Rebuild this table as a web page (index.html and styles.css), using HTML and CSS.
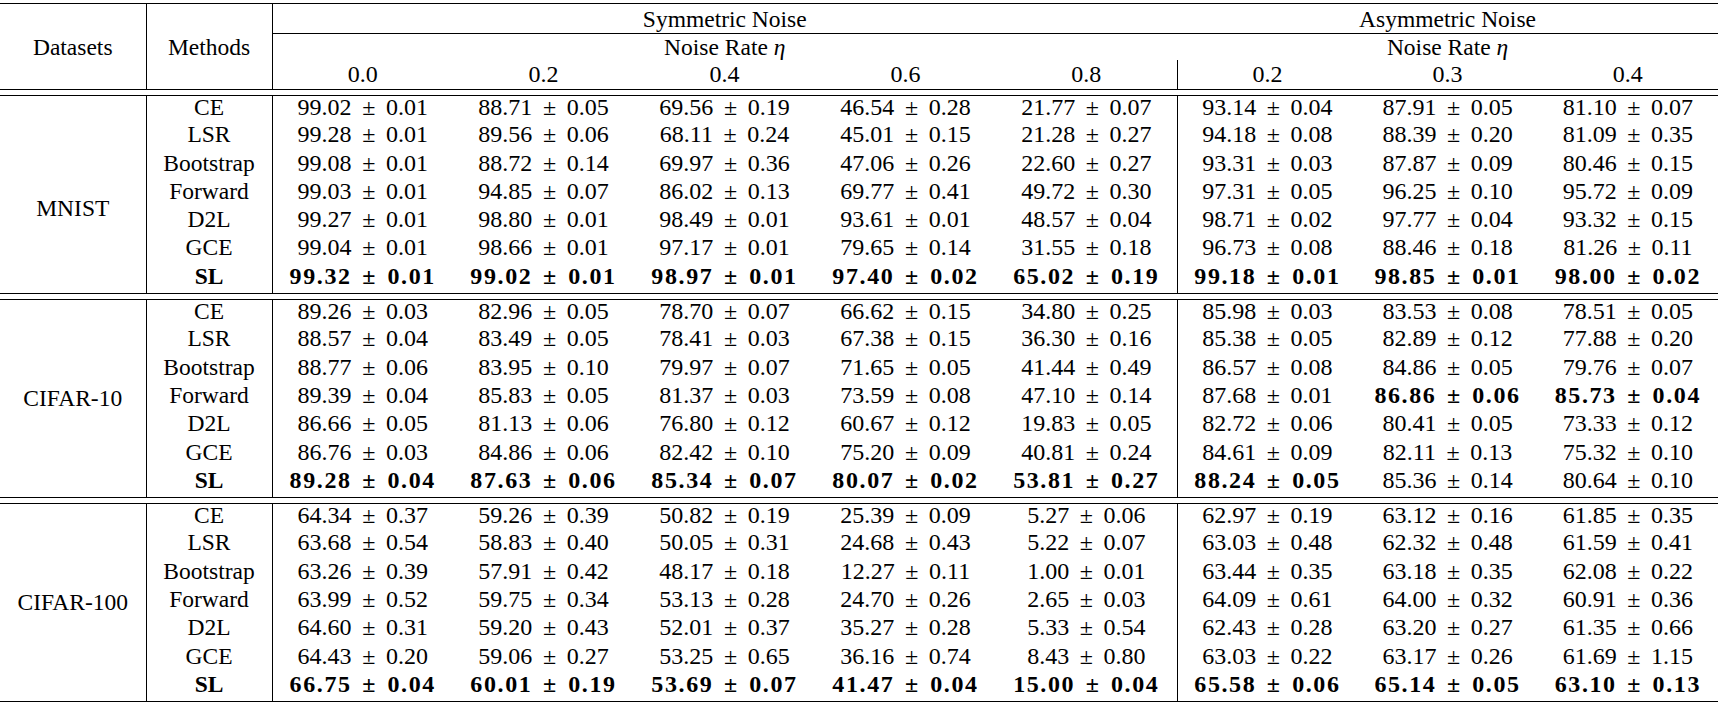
FILE: index.html
```html
<!DOCTYPE html>
<html>
<head>
<meta charset="utf-8">
<link rel="stylesheet" href="styles.css">
</head>
<body>
<table class="tbl">
<colgroup>
<col class="c-ds"><col class="c-m">
<col class="c-s"><col class="c-s"><col class="c-s"><col class="c-s"><col class="c-s">
<col class="c-a"><col class="c-a"><col class="c-a">
</colgroup>
<thead>
<tr class="h1">
<th rowspan="3" class="lbl vr">Datasets</th>
<th rowspan="3" class="lbl vr">Methods</th>
<th colspan="5" class="lbl cl">Symmetric Noise</th>
<th colspan="3" class="lbl cl">Asymmetric Noise</th>
</tr>
<tr class="h2">
<th colspan="5" class="lbl">Noise Rate <i class="eta">η</i></th>
<th colspan="3" class="lbl">Noise Rate <i class="eta">η</i></th>
</tr>
<tr class="h3">
<th class="num">0.0</th><th class="num">0.2</th><th class="num">0.4</th><th class="num">0.6</th><th class="num vr">0.8</th>
<th class="num">0.2</th><th class="num">0.3</th><th class="num">0.4</th>
</tr>
</thead>
<tbody>
<tr class="dbl dbl-head"><td colspan="10"></td></tr>
<tr><td rowspan="7" class="lbl vr ds ds-mnist">MNIST</td><td class="lbl vr">CE</td>
<td>99.02<span class="pm">±</span>0.01</td><td>88.71<span class="pm">±</span>0.05</td><td>69.56<span class="pm">±</span>0.19</td><td>46.54<span class="pm">±</span>0.28</td><td class="vr">21.77<span class="pm">±</span>0.07</td>
<td>93.14<span class="pm">±</span>0.04</td><td>87.91<span class="pm">±</span>0.05</td><td>81.10<span class="pm">±</span>0.07</td></tr>
<tr><td class="lbl vr">LSR</td>
<td>99.28<span class="pm">±</span>0.01</td><td>89.56<span class="pm">±</span>0.06</td><td>68.11<span class="pm">±</span>0.24</td><td>45.01<span class="pm">±</span>0.15</td><td class="vr">21.28<span class="pm">±</span>0.27</td>
<td>94.18<span class="pm">±</span>0.08</td><td>88.39<span class="pm">±</span>0.20</td><td>81.09<span class="pm">±</span>0.35</td></tr>
<tr><td class="lbl vr">Bootstrap</td>
<td>99.08<span class="pm">±</span>0.01</td><td>88.72<span class="pm">±</span>0.14</td><td>69.97<span class="pm">±</span>0.36</td><td>47.06<span class="pm">±</span>0.26</td><td class="vr">22.60<span class="pm">±</span>0.27</td>
<td>93.31<span class="pm">±</span>0.03</td><td>87.87<span class="pm">±</span>0.09</td><td>80.46<span class="pm">±</span>0.15</td></tr>
<tr><td class="lbl vr">Forward</td>
<td>99.03<span class="pm">±</span>0.01</td><td>94.85<span class="pm">±</span>0.07</td><td>86.02<span class="pm">±</span>0.13</td><td>69.77<span class="pm">±</span>0.41</td><td class="vr">49.72<span class="pm">±</span>0.30</td>
<td>97.31<span class="pm">±</span>0.05</td><td>96.25<span class="pm">±</span>0.10</td><td>95.72<span class="pm">±</span>0.09</td></tr>
<tr><td class="lbl vr">D2L</td>
<td>99.27<span class="pm">±</span>0.01</td><td>98.80<span class="pm">±</span>0.01</td><td>98.49<span class="pm">±</span>0.01</td><td>93.61<span class="pm">±</span>0.01</td><td class="vr">48.57<span class="pm">±</span>0.04</td>
<td>98.71<span class="pm">±</span>0.02</td><td>97.77<span class="pm">±</span>0.04</td><td>93.32<span class="pm">±</span>0.15</td></tr>
<tr><td class="lbl vr">GCE</td>
<td>99.04<span class="pm">±</span>0.01</td><td>98.66<span class="pm">±</span>0.01</td><td>97.17<span class="pm">±</span>0.01</td><td>79.65<span class="pm">±</span>0.14</td><td class="vr">31.55<span class="pm">±</span>0.18</td>
<td>96.73<span class="pm">±</span>0.08</td><td>88.46<span class="pm">±</span>0.18</td><td>81.26<span class="pm">±</span>0.11</td></tr>
<tr><td class="lbl vr b">SL</td>
<td class="b">99.32<span class="pm">±</span>0.01</td><td class="b">99.02<span class="pm">±</span>0.01</td><td class="b">98.97<span class="pm">±</span>0.01</td><td class="b">97.40<span class="pm">±</span>0.02</td><td class="b vr">65.02<span class="pm">±</span>0.19</td>
<td class="b">99.18<span class="pm">±</span>0.01</td><td class="b">98.85<span class="pm">±</span>0.01</td><td class="b">98.00<span class="pm">±</span>0.02</td></tr>

<tr class="dbl"><td colspan="10"></td></tr>
<tr><td rowspan="7" class="lbl vr ds">CIFAR-10</td><td class="lbl vr">CE</td>
<td>89.26<span class="pm">±</span>0.03</td><td>82.96<span class="pm">±</span>0.05</td><td>78.70<span class="pm">±</span>0.07</td><td>66.62<span class="pm">±</span>0.15</td><td class="vr">34.80<span class="pm">±</span>0.25</td>
<td>85.98<span class="pm">±</span>0.03</td><td>83.53<span class="pm">±</span>0.08</td><td>78.51<span class="pm">±</span>0.05</td></tr>
<tr><td class="lbl vr">LSR</td>
<td>88.57<span class="pm">±</span>0.04</td><td>83.49<span class="pm">±</span>0.05</td><td>78.41<span class="pm">±</span>0.03</td><td>67.38<span class="pm">±</span>0.15</td><td class="vr">36.30<span class="pm">±</span>0.16</td>
<td>85.38<span class="pm">±</span>0.05</td><td>82.89<span class="pm">±</span>0.12</td><td>77.88<span class="pm">±</span>0.20</td></tr>
<tr><td class="lbl vr">Bootstrap</td>
<td>88.77<span class="pm">±</span>0.06</td><td>83.95<span class="pm">±</span>0.10</td><td>79.97<span class="pm">±</span>0.07</td><td>71.65<span class="pm">±</span>0.05</td><td class="vr">41.44<span class="pm">±</span>0.49</td>
<td>86.57<span class="pm">±</span>0.08</td><td>84.86<span class="pm">±</span>0.05</td><td>79.76<span class="pm">±</span>0.07</td></tr>
<tr><td class="lbl vr">Forward</td>
<td>89.39<span class="pm">±</span>0.04</td><td>85.83<span class="pm">±</span>0.05</td><td>81.37<span class="pm">±</span>0.03</td><td>73.59<span class="pm">±</span>0.08</td><td class="vr">47.10<span class="pm">±</span>0.14</td>
<td>87.68<span class="pm">±</span>0.01</td><td class="b">86.86<span class="pm">±</span>0.06</td><td class="b">85.73<span class="pm">±</span>0.04</td></tr>
<tr><td class="lbl vr">D2L</td>
<td>86.66<span class="pm">±</span>0.05</td><td>81.13<span class="pm">±</span>0.06</td><td>76.80<span class="pm">±</span>0.12</td><td>60.67<span class="pm">±</span>0.12</td><td class="vr">19.83<span class="pm">±</span>0.05</td>
<td>82.72<span class="pm">±</span>0.06</td><td>80.41<span class="pm">±</span>0.05</td><td>73.33<span class="pm">±</span>0.12</td></tr>
<tr><td class="lbl vr">GCE</td>
<td>86.76<span class="pm">±</span>0.03</td><td>84.86<span class="pm">±</span>0.06</td><td>82.42<span class="pm">±</span>0.10</td><td>75.20<span class="pm">±</span>0.09</td><td class="vr">40.81<span class="pm">±</span>0.24</td>
<td>84.61<span class="pm">±</span>0.09</td><td>82.11<span class="pm">±</span>0.13</td><td>75.32<span class="pm">±</span>0.10</td></tr>
<tr><td class="lbl vr b">SL</td>
<td class="b">89.28<span class="pm">±</span>0.04</td><td class="b">87.63<span class="pm">±</span>0.06</td><td class="b">85.34<span class="pm">±</span>0.07</td><td class="b">80.07<span class="pm">±</span>0.02</td><td class="b vr">53.81<span class="pm">±</span>0.27</td>
<td class="b">88.24<span class="pm">±</span>0.05</td><td>85.36<span class="pm">±</span>0.14</td><td>80.64<span class="pm">±</span>0.10</td></tr>

<tr class="dbl"><td colspan="10"></td></tr>
<tr><td rowspan="7" class="lbl vr ds">CIFAR-100</td><td class="lbl vr">CE</td>
<td>64.34<span class="pm">±</span>0.37</td><td>59.26<span class="pm">±</span>0.39</td><td>50.82<span class="pm">±</span>0.19</td><td>25.39<span class="pm">±</span>0.09</td><td class="vr">5.27<span class="pm">±</span>0.06</td>
<td>62.97<span class="pm">±</span>0.19</td><td>63.12<span class="pm">±</span>0.16</td><td>61.85<span class="pm">±</span>0.35</td></tr>
<tr><td class="lbl vr">LSR</td>
<td>63.68<span class="pm">±</span>0.54</td><td>58.83<span class="pm">±</span>0.40</td><td>50.05<span class="pm">±</span>0.31</td><td>24.68<span class="pm">±</span>0.43</td><td class="vr">5.22<span class="pm">±</span>0.07</td>
<td>63.03<span class="pm">±</span>0.48</td><td>62.32<span class="pm">±</span>0.48</td><td>61.59<span class="pm">±</span>0.41</td></tr>
<tr><td class="lbl vr">Bootstrap</td>
<td>63.26<span class="pm">±</span>0.39</td><td>57.91<span class="pm">±</span>0.42</td><td>48.17<span class="pm">±</span>0.18</td><td>12.27<span class="pm">±</span>0.11</td><td class="vr">1.00<span class="pm">±</span>0.01</td>
<td>63.44<span class="pm">±</span>0.35</td><td>63.18<span class="pm">±</span>0.35</td><td>62.08<span class="pm">±</span>0.22</td></tr>
<tr><td class="lbl vr">Forward</td>
<td>63.99<span class="pm">±</span>0.52</td><td>59.75<span class="pm">±</span>0.34</td><td>53.13<span class="pm">±</span>0.28</td><td>24.70<span class="pm">±</span>0.26</td><td class="vr">2.65<span class="pm">±</span>0.03</td>
<td>64.09<span class="pm">±</span>0.61</td><td>64.00<span class="pm">±</span>0.32</td><td>60.91<span class="pm">±</span>0.36</td></tr>
<tr><td class="lbl vr">D2L</td>
<td>64.60<span class="pm">±</span>0.31</td><td>59.20<span class="pm">±</span>0.43</td><td>52.01<span class="pm">±</span>0.37</td><td>35.27<span class="pm">±</span>0.28</td><td class="vr">5.33<span class="pm">±</span>0.54</td>
<td>62.43<span class="pm">±</span>0.28</td><td>63.20<span class="pm">±</span>0.27</td><td>61.35<span class="pm">±</span>0.66</td></tr>
<tr><td class="lbl vr">GCE</td>
<td>64.43<span class="pm">±</span>0.20</td><td>59.06<span class="pm">±</span>0.27</td><td>53.25<span class="pm">±</span>0.65</td><td>36.16<span class="pm">±</span>0.74</td><td class="vr">8.43<span class="pm">±</span>0.80</td>
<td>63.03<span class="pm">±</span>0.22</td><td>63.17<span class="pm">±</span>0.26</td><td>61.69<span class="pm">±</span>1.15</td></tr>
<tr class="last"><td class="lbl vr b">SL</td>
<td class="b">66.75<span class="pm">±</span>0.04</td><td class="b">60.01<span class="pm">±</span>0.19</td><td class="b">53.69<span class="pm">±</span>0.07</td><td class="b">41.47<span class="pm">±</span>0.04</td><td class="b vr">15.00<span class="pm">±</span>0.04</td>
<td class="b">65.58<span class="pm">±</span>0.06</td><td class="b">65.14<span class="pm">±</span>0.05</td><td class="b">63.10<span class="pm">±</span>0.13</td></tr>
</tbody>
</table>
</body>
</html>
```
FILE: styles.css
```css
html, body {
  margin: 0;
  padding: 0;
  background: #ffffff;
}
body {
  padding-top: 3px;
  font-family: "Liberation Serif", "DejaVu Serif", serif;
  color: #000000;
}
.tbl {
  border-collapse: collapse;
  table-layout: fixed;
  width: 1718px;
  border-top: 1px solid #000;
  border-bottom: 1px solid #000;
  font-family: "Liberation Serif", "DejaVu Serif", serif;
}
.c-ds { width: 146px; }
.c-m { width: 126px; }
.c-s { width: 181px; }
.c-a { width: 180.33px; }

.tbl th, .tbl td {
  font-family: "Liberation Serif", "DejaVu Serif", serif;
  padding: 0;
  text-align: center;
  font-weight: normal;
  white-space: nowrap;
  font-size: 24px;
  line-height: 22px;
  vertical-align: top;
}
.tbl .lbl {
  font-size: 23.5px;
}
.tbl thead th {
  vertical-align: middle;
  line-height: 24px;
}
.h1 { height: 30px; }
.h2 { height: 26px; }
.h3 { height: 30px; }
.tbl .cl { border-bottom: 1px solid #000; }
.tbl .vr { border-right: 1px solid #000; }
.tbl .eta { font-style: italic; }

.tbl .dbl td {
  height: 5px;
  padding: 0;
  border-top: 1px solid #000;
  border-bottom: 1px solid #000;
}
.tbl .dbl-head td { height: 4.5px; }
.tbl tbody tr { height: 28.3px; }
.tbl tbody tr.dbl { height: 5px; }
.tbl tbody tr.dbl-head { height: 4.5px; }

.tbl .pm { margin: 0 0.44em; }
.tbl td.b { font-weight: bold; letter-spacing: 1.6px; }
.tbl td.lbl.b { letter-spacing: 0; }
.tbl td.ds { vertical-align: middle; }
.tbl td.ds-mnist { padding-top: 28px; }
```
